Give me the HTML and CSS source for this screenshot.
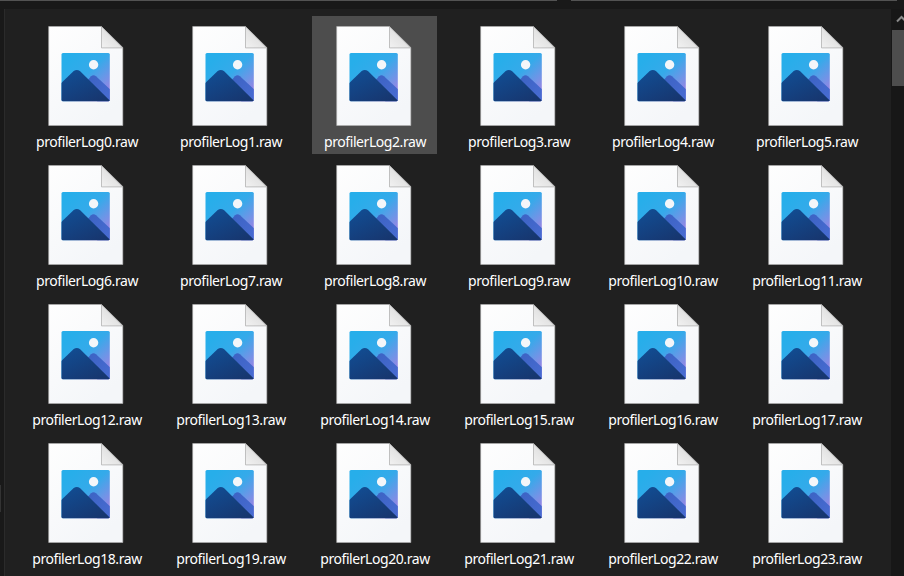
FILE: index.html
```
<!DOCTYPE html>
<html lang="en">
<head>
    <meta charset="UTF-8">
    <meta name="viewport" content="width=device-width, initial-scale=1.0">
    <title>Profiler Logs</title>
    <link rel="stylesheet" href="styles.css">
</head>
<body>

    <svg class="defs" width="0" height="0">
        <defs>
            <linearGradient id="paper" x1="0" y1="0" x2="0.6" y2="1">
                <stop offset="0" stop-color="#fefefe"/>
                <stop offset="1" stop-color="#f4f6f9"/>
            </linearGradient>
            <linearGradient id="fold" x1="0" y1="1" x2="0.7" y2="0.2">
                <stop offset="0" stop-color="#f2f2f2"/>
                <stop offset="1" stop-color="#dadada"/>
            </linearGradient>
            <linearGradient id="sky" x1="0.3" y1="0" x2="1" y2="0.75">
                <stop offset="0" stop-color="#27aeea"/>
                <stop offset="0.45" stop-color="#35aaea"/>
                <stop offset="1" stop-color="#9c84e4"/>
            </linearGradient>
            <linearGradient id="hill" x1="0" y1="0" x2="0.7" y2="1">
                <stop offset="0" stop-color="#114f96"/>
                <stop offset="1" stop-color="#17366f"/>
            </linearGradient>
            <linearGradient id="hillBack" x1="0" y1="0" x2="1" y2="1">
                <stop offset="0" stop-color="#3b62c2"/>
                <stop offset="1" stop-color="#4a6dd4"/>
            </linearGradient>
            <clipPath id="frame"><rect x="13.5" y="27" width="48.3" height="48.3" rx="1.5"/></clipPath>
        </defs>
        <symbol id="raw-file" viewBox="0 0 77 102">
            <path d="M.7.5H53.5L74.8 21.5v78H.7z" fill="url(#paper)" stroke="#b4b4b4" stroke-width=".6"/>
            <path d="M53.5.7 74.6 21.9H53.5z" fill="url(#fold)" stroke="#a9a9a9" stroke-width=".7"/>
            <g clip-path="url(#frame)">
                <rect x="13" y="26" width="50" height="50" fill="url(#sky)"/>
                <path d="M38 56 43 50.3q2.5-2 5 0L63 64.3V77H50z" fill="url(#hillBack)"/>
                <path d="M13 57.2 25.7 45.1q3.1-2.4 6.2 0L62 74.8V77H13z" fill="url(#hill)"/>
            </g>
            <circle cx="45.6" cy="38.7" r="4.7" fill="#f4f6f9"/>
        </symbol>
    </svg>

    <div class="toolbar">
        <div class="field path"></div>
        <div class="field search"></div>
    </div>

    <div class="window">
        <div class="nav"><div class="nav-thumb"></div></div>
        <div class="files" id="files"></div>
        <div class="scrollbar">
            <svg class="arrow" width="11" height="8" viewBox="0 0 11 8"><path d="M1 6.5 5.5 2 10 6.5"/></svg>
            <div class="thumb"></div>
        </div>
    </div>

    <script>
        let files = document.getElementById("files");
        for (let i = 0; i < 24; i++) {
            files.innerHTML += `<div class="file${i === 2 ? " hover" : ""}">
                <svg class="icon"><use href="#raw-file"/></svg>
                <span class="name">profilerLog${i}.raw</span>
            </div>`;
        }
    </script>

</body>
</html>
```
FILE: styles.css
```
body {
    margin: 0;
    height: 576px;
    overflow: hidden;
    display: flex;
    flex-direction: column;
    background: #191919;
    font-family: "Noto Sans", "Open Sans", sans-serif;
    font-size: 14px;
    color: white;
}
.defs {
    position: absolute;
}
.toolbar {
    display: flex;
    gap: 14px;
    height: 9px;
    flex-shrink: 0;
}
.field {
    height: 1px;
    background: #535353;
}
.path {
    width: 557px;
}
.search {
    width: 326px;
}
.window {
    display: flex;
    flex: 1;
    min-height: 0;
}
.nav {
    width: 4px;
    border-right: 1px solid #2b2b2b;
    flex-shrink: 0;
}
.nav-thumb {
    width: 1px;
    height: 27px;
    margin-top: 476px;
    background: #333;
}
.files {
    display: grid;
    grid-template-columns: repeat(6, 125px);
    grid-auto-rows: 138px;
    gap: 1px 19px;
    align-content: start;
    width: 886px;
    box-sizing: border-box;
    padding: 7px 0 0 19px;
    background: #202020;
    flex-shrink: 0;
}
.file {
    display: flex;
    flex-direction: column;
    align-items: center;
    padding-top: 10px;
    box-sizing: border-box;
}
.hover {
    background: #4d4d4d;
}
.icon {
    width: 77px;
    height: 102px;
}
.name {
    margin-top: 4px;
    padding-left: 1px;
    line-height: 20px;
    letter-spacing: -0.43px;
    white-space: nowrap;
}
.scrollbar {
    width: 13px;
    box-sizing: border-box;
    padding: 6px 0 0 1px;
    background: #171717;
    overflow: hidden;
}
.arrow {
    display: block;
    margin-left: 4px;
    fill: none;
    stroke: #8a8a8a;
    stroke-width: 2;
}
.thumb {
    height: 56px;
    margin-top: 7px;
    background: #4d4d4d;
}
```
